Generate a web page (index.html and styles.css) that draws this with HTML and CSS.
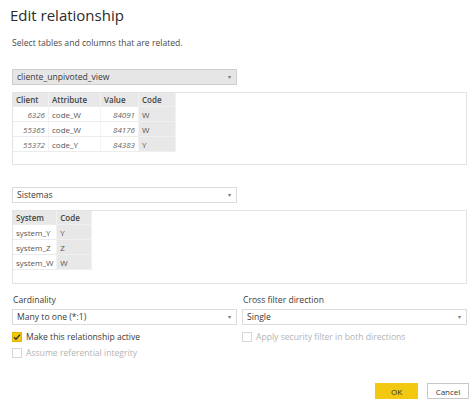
FILE: index.html
```html
<!DOCTYPE html>
<html lang="en">
  <head>
    <meta charset="UTF-8" />
    <title>Edit relationship</title>
    <link rel="stylesheet" href="styles.css">
  </head>
  <body>
    <div class="dialog">
      <h1>Edit relationship</h1>
      <p class="subtitle">Select tables and columns that are related.</p>

      <div class="select active">
        <span>cliente_unpivoted_view</span>
        <span class="caret">▾</span>
      </div>
      <div class="preview first">
        <table>
          <tr>
            <th class="c-client">Client</th>
            <th class="c-attr">Attribute</th>
            <th class="c-value">Value</th>
            <th class="c-code sel">Code</th>
          </tr>
          <tr>
            <td class="num">6326</td><td>code_W</td><td class="num">84091</td><td class="sel">W</td>
          </tr>
          <tr>
            <td class="num">55365</td><td>code_W</td><td class="num">84176</td><td class="sel">W</td>
          </tr>
          <tr>
            <td class="num">55372</td><td>code_Y</td><td class="num">84383</td><td class="sel">Y</td>
          </tr>
        </table>
      </div>

      <div class="select second">
        <span>Sistemas</span>
        <span class="caret">▾</span>
      </div>
      <div class="preview">
        <table>
          <tr>
            <th class="c-system">System</th>
            <th class="c-code2 sel">Code</th>
          </tr>
          <tr><td>system_Y</td><td class="sel">Y</td></tr>
          <tr><td>system_Z</td><td class="sel">Z</td></tr>
          <tr><td>system_W</td><td class="sel">W</td></tr>
        </table>
      </div>

      <div class="options">
        <div class="field">
          <label class="label">Cardinality</label>
          <div class="select">
            <span>Many to one (*:1)</span>
            <span class="caret">▾</span>
          </div>
          <div class="check">
            <span class="box checked">
              <svg width="8" height="8" viewBox="0 0 8 8"><path d="M1 4.2 L3 6.2 L7 1.6" fill="none" stroke="#333" stroke-width="1.4"/></svg>
            </span>
            <span>Make this relationship active</span>
          </div>
          <div class="check disabled">
            <span class="box"></span>
            <span>Assume referential integrity</span>
          </div>
        </div>
        <div class="field">
          <label class="label">Cross filter direction</label>
          <div class="select">
            <span>Single</span>
            <span class="caret">▾</span>
          </div>
          <div class="check disabled">
            <span class="box"></span>
            <span>Apply security filter in both directions</span>
          </div>
        </div>
      </div>

      <div class="buttons">
        <button class="btn primary">OK</button>
        <button class="btn">Cancel</button>
      </div>
    </div>
  </body>
</html>
```

FILE: styles.css
```css
body {
  margin: 0;
  padding: 0;
  background: #fff;
  font-family: "Open Sans", "Noto Sans", sans-serif;
  color: #444;
}

.dialog {
  width: 455px;
  padding: 5px 0 0 12px;
}

h1 {
  margin: 0 0 0 -2px;
  font-size: 15px;
  line-height: 20px;
  font-weight: 400;
  color: #2b2b2b;
}

.subtitle {
  margin: 12px 0 0 0;
  font-size: 8.6px;
  line-height: 12px;
  color: #4a4a4a;
}

.select {
  display: flex;
  justify-content: space-between;
  align-items: center;
  box-sizing: border-box;
  width: 225px;
  height: 16px;
  padding: 0 5px 0 4px;
  border: 1px solid #dcdcdc;
  background: #fff;
  font-size: 8.6px;
  color: #3a3a3a;
}

.select.active {
  margin-top: 20px;
  background: #e6e6e6;
  border-color: #cfcfcf;
}

.select.second {
  margin-top: 22px;
}

.caret {
  font-size: 6px;
  color: #777;
}

.preview {
  box-sizing: border-box;
  width: 455px;
  height: 74px;
  margin-top: 7px;
  border: 1px solid #e3e3e3;
}

.preview.first {
  height: 73px;
}

table {
  border-collapse: collapse;
  font-size: 8px;
  color: #555;
}

th,
td {
  height: 14px;
  padding: 0 3px;
  text-align: left;
  border-bottom: 1px solid #ececec;
  border-right: 1px solid #f3f3f3;
  white-space: nowrap;
}

th {
  height: 13px;
  background: #e8e8e8;
  font-weight: 600;
  color: #444;
  border-right-color: #f2f2f2;
}

td.sel,
th.sel {
  background: #e8e8e8;
  border-bottom-color: #f0f0f0;
}

td.num {
  text-align: right;
  font-style: italic;
  color: #666;
}

.c-client { width: 29px; }
.c-attr { width: 45px; }
.c-value { width: 31px; }
.c-code { width: 30px; }
.c-system { width: 36px; }
.c-code2 { width: 28px; }

.options {
  display: grid;
  grid-template-columns: 225px 225px;
  column-gap: 5px;
  margin-top: 10px;
}

.label {
  display: block;
  margin-left: 1px;
  font-size: 8.6px;
  line-height: 12px;
  color: #3a3a3a;
}

.field .select {
  margin-top: 3px;
}

.check {
  display: flex;
  align-items: center;
  gap: 4px;
  margin-top: 6px;
  height: 11px;
  font-size: 8.6px;
  color: #3a3a3a;
}

.field .check + .check {
  margin-top: 5px;
}

.check.disabled {
  color: #b4b4b4;
}

.box {
  display: flex;
  align-items: center;
  justify-content: center;
  box-sizing: border-box;
  width: 10px;
  height: 10px;
  border: 1px solid #d6d6d6;
  background: #fff;
}

.box.checked {
  background: #f2c811;
  border-color: #e0b800;
}

.buttons {
  display: flex;
  justify-content: flex-end;
  gap: 9px;
  width: 457px;
  margin-top: 25px;
}

.btn {
  box-sizing: border-box;
  width: 42px;
  height: 16px;
  padding: 0;
  border: 1px solid #c8c8c8;
  background: #fff;
  font-family: "Open Sans", "Noto Sans", sans-serif;
  font-size: 8px;
  color: #333;
}

.btn.primary {
  width: 43px;
  background: #f2c811;
  border-color: #f2c811;
}
```
